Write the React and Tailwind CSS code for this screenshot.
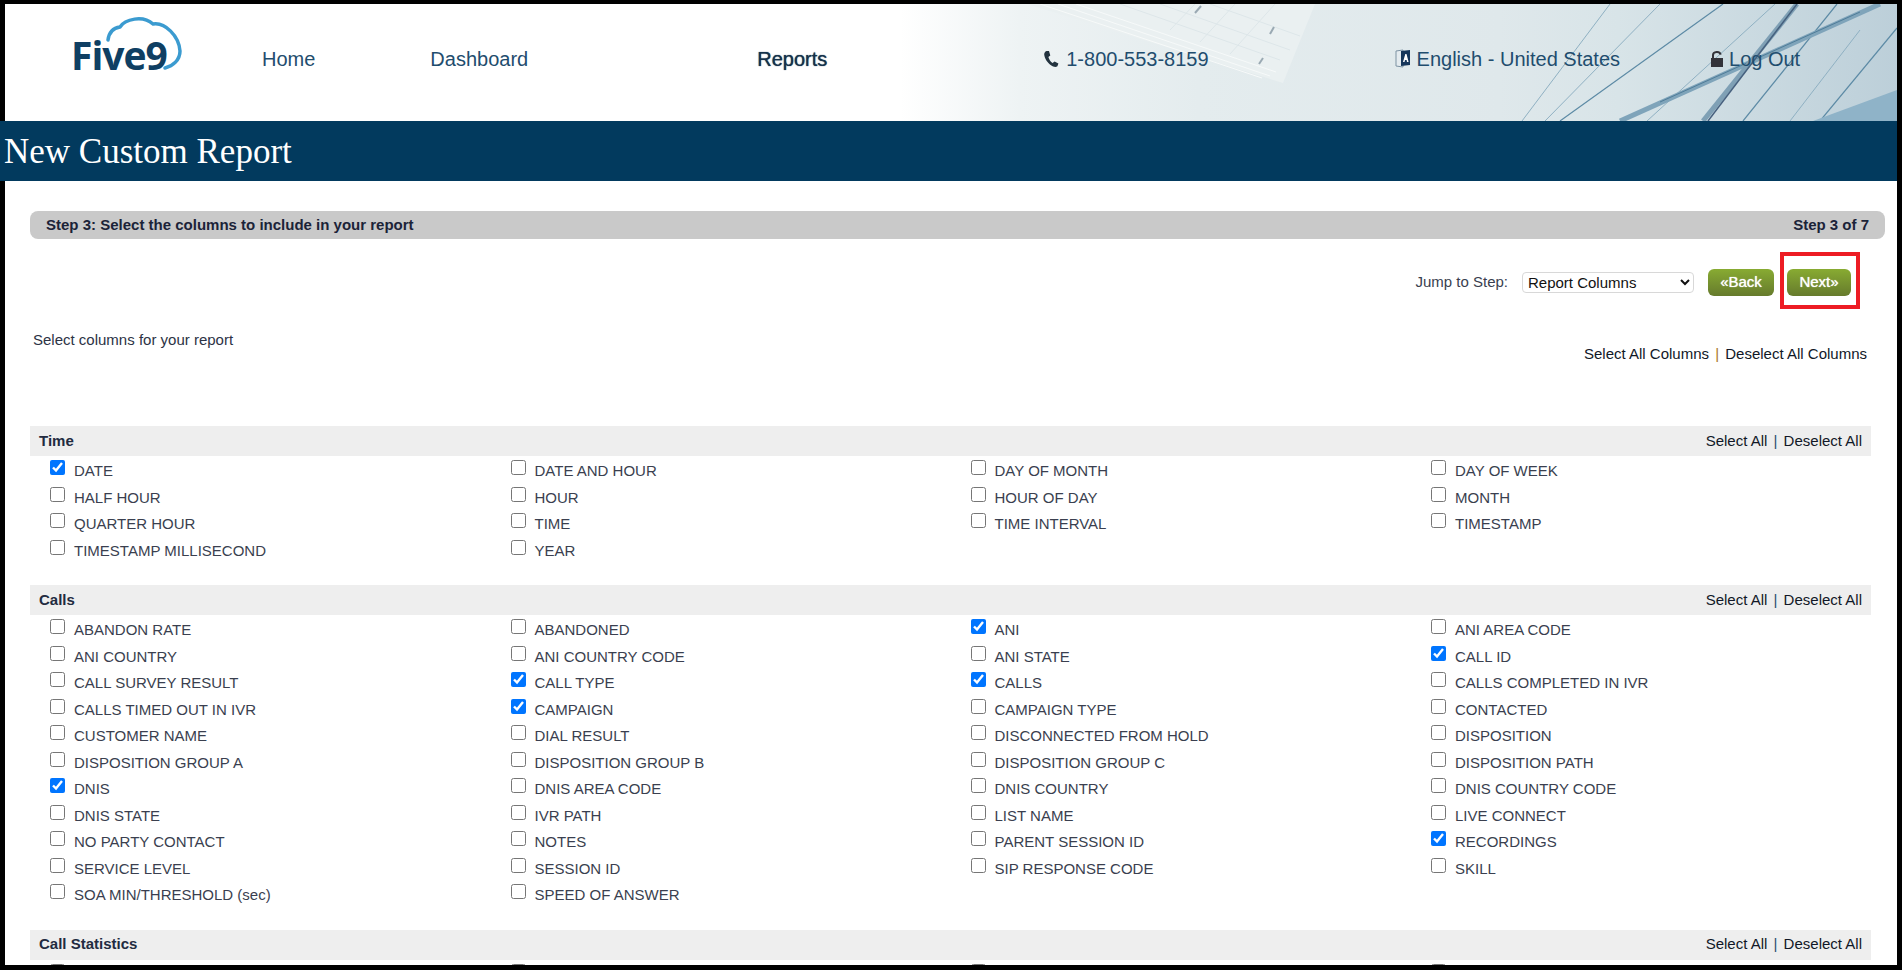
import { useState } from "react";

const sections = [
  {
    title: "Time",
    rows: [
      ["DATE*", "DATE AND HOUR", "DAY OF MONTH", "DAY OF WEEK"],
      ["HALF HOUR", "HOUR", "HOUR OF DAY", "MONTH"],
      ["QUARTER HOUR", "TIME", "TIME INTERVAL", "TIMESTAMP"],
      ["TIMESTAMP MILLISECOND", "YEAR"],
    ],
  },
  {
    title: "Calls",
    rows: [
      ["ABANDON RATE", "ABANDONED", "ANI*", "ANI AREA CODE"],
      ["ANI COUNTRY", "ANI COUNTRY CODE", "ANI STATE", "CALL ID*"],
      ["CALL SURVEY RESULT", "CALL TYPE*", "CALLS*", "CALLS COMPLETED IN IVR"],
      ["CALLS TIMED OUT IN IVR", "CAMPAIGN*", "CAMPAIGN TYPE", "CONTACTED"],
      ["CUSTOMER NAME", "DIAL RESULT", "DISCONNECTED FROM HOLD", "DISPOSITION"],
      ["DISPOSITION GROUP A", "DISPOSITION GROUP B", "DISPOSITION GROUP C", "DISPOSITION PATH"],
      ["DNIS*", "DNIS AREA CODE", "DNIS COUNTRY", "DNIS COUNTRY CODE"],
      ["DNIS STATE", "IVR PATH", "LIST NAME", "LIVE CONNECT"],
      ["NO PARTY CONTACT", "NOTES", "PARENT SESSION ID", "RECORDINGS*"],
      ["SERVICE LEVEL", "SESSION ID", "SIP RESPONSE CODE", "SKILL"],
      ["SOA MIN/THRESHOLD (sec)", "SPEED OF ANSWER"],
    ],
  },
  {
    title: "Call Statistics",
    rows: [["", "", "", ""]],
  },
];

// building photo behind the header, viewBox uses page coordinates
function HeaderArt() {
  return (
    <svg className="absolute inset-0 h-full w-full" viewBox="5 4 1892 117" preserveAspectRatio="none">
      <defs>
        <linearGradient id="fade" gradientUnits="userSpaceOnUse" x1="900" y1="0" x2="1897" y2="0">
          <stop offset="0" stopColor="#ffffff" />
          <stop offset="0.12" stopColor="#eef3f4" />
          <stop offset="0.3" stopColor="#e4ecee" />
          <stop offset="0.6" stopColor="#dfe8eb" />
          <stop offset="0.72" stopColor="#d8e4e8" />
          <stop offset="1" stopColor="#bccfd9" />
        </linearGradient>
      </defs>
      <rect x="5" y="4" width="1892" height="117" fill="url(#fade)" />
      <polygon points="1027,4 1315,4 1283,83" fill="#eaf0f1" />
      <g stroke="#f6f9f9" strokeWidth="1">
        <line x1="1040" y1="4" x2="1262" y2="78" />
        <line x1="1058" y1="4" x2="1270" y2="76" />
        <line x1="1076" y1="4" x2="1276" y2="72" />
      </g>
      <g stroke="#dde6e9" strokeWidth="1">
        <line x1="1120" y1="4" x2="1280" y2="60" />
        <line x1="1160" y1="4" x2="1290" y2="50" />
        <line x1="1210" y1="4" x2="1300" y2="36" />
        <line x1="1170" y1="30" x2="1195" y2="4" />
        <line x1="1200" y1="42" x2="1235" y2="4" />
        <line x1="1230" y1="54" x2="1275" y2="4" />
      </g>
      <g stroke="#9aa9b3" strokeWidth="2">
        <line x1="1195" y1="13" x2="1201" y2="6" />
        <line x1="1270" y1="34" x2="1274" y2="27" />
        <line x1="1259" y1="64" x2="1263" y2="58" />
      </g>
      <g stroke="#8fb0c2" strokeWidth="1" fill="none">
        <line x1="1522" y1="121" x2="1610" y2="4" />
        <line x1="1545" y1="121" x2="1660" y2="4" />
        <line x1="1647" y1="121" x2="1775" y2="4" />
        <line x1="1790" y1="121" x2="1860" y2="30" />
      </g>
      <g stroke="#5c8aa5" strokeWidth="1.2" fill="none">
        <line x1="1560" y1="121" x2="1723" y2="4" />
        <line x1="1743" y1="121" x2="1837" y2="4" />
        <line x1="1820" y1="121" x2="1897" y2="28" />
      </g>
      <line x1="1620" y1="121" x2="1880" y2="4" stroke="#7fa4ba" strokeWidth="5" />
      <line x1="1660" y1="102" x2="1860" y2="12" stroke="#4f7c98" strokeWidth="1" />
      <line x1="1703" y1="121" x2="1797" y2="4" stroke="#7fa0b5" strokeWidth="5" />
      <line x1="1708" y1="121" x2="1797" y2="4" stroke="#46607e" strokeWidth="1.5" />
      <polygon points="1813,121 1897,90 1897,121" fill="#8fb3c8" />
    </svg>
  );
}

function Logo() {
  return (
    <div className="relative h-[62px] w-[110px]">
      <svg className="absolute inset-0 overflow-visible" width="110" height="62" viewBox="0 0 110 62" fill="none">
        <path
          d="M35 24 C36 16 40 12 47 11 C52 3 70 -1 80 8 C92 6 106 20 107 35 C107 44 100 50 92 52"
          stroke="#3b9bd0"
          strokeWidth="3.5"
          strokeLinecap="round"
        />
      </svg>
      <span className="absolute bottom-[4px] left-[-2px] font-['Open_Sans',sans-serif] text-[39px] font-bold leading-none tracking-[-1px] text-[#0f3f63]">
        Five9
      </span>
    </div>
  );
}

function Field({ label }) {
  if (label === "") {
    return (
      <label className="flex items-start gap-[9px]">
        <input type="checkbox" className="mt-[3px] h-[15px] w-[15px]" />
      </label>
    );
  }
  const checked = label.endsWith("*");
  return (
    <label className="flex items-start gap-[9px]">
      <input type="checkbox" defaultChecked={checked} className="mt-[3px] h-[15px] w-[15px]" />
      <span className="mt-[5px] text-[15px] leading-[17px] text-[#3a3f4f]">{label.replace("*", "")}</span>
    </label>
  );
}

function Section({ section }) {
  return (
    <section className="mb-[22px]">
      <div className="flex h-[30px] items-center justify-between bg-[#eeeeee] px-[9px]">
        <h3 className="text-[15px] font-bold text-[#222b40]">{section.title}</h3>
        <p className="text-[15px] text-[#111827]">
          Select All <span className="mx-[2px] text-[#1f4d6e]">|</span> Deselect All
        </p>
      </div>
      <div className="pl-[20px] pt-[1px]">
        {section.rows.map((row, i) => (
          <div key={i} className="grid h-[26.5px] grid-cols-[460.5px_460px_460.5px_1fr]">
            {row.map((label, j) => (
              <Field key={j} label={label} />
            ))}
          </div>
        ))}
      </div>
    </section>
  );
}

export default function App() {
  const [step, setStep] = useState("Report Columns");

  return (
    <div className="h-[970px] w-[1902px] overflow-hidden bg-white font-['Liberation_Sans',Arial,sans-serif]">
      <div className="flex h-full flex-col border-b-[5px] border-l-[5px] border-r-[5px] border-t-[4px] border-black bg-white">
        <header className="relative flex h-[117px] shrink-0 items-start text-[20px] text-[#1f4d6e]">
          <HeaderArt />
          <div className="relative ml-[68px] mt-[12px]">
            <Logo />
          </div>
          <nav className="relative flex items-center pt-[40px]">
            <a className="ml-[79px]">Home</a>
            <a className="ml-[115px]">Dashboard</a>
            <a className="ml-[229px] text-[#15324b] [text-shadow:0_0_1px_#15324b]">Reports</a>
            <a className="ml-[216px] flex items-center gap-[7px]">
              <svg width="16" height="18" viewBox="0 0 16 18" fill="#23333f">
                <path d="M3.5 1 L6 1 L7.3 5.4 L5.4 7 C6 9.6 7.6 11.8 9.6 13 L11.6 11.4 L15.4 13.6 L14.4 16.3 C12.8 17.6 10.3 17 8 15.3 C4.4 12.7 1.6 8.6 1.2 4.6 C1.1 3 2 1.6 3.5 1 Z" />
              </svg>
              1-800-553-8159
            </a>
            <a className="ml-[186px] flex items-center gap-[6px]">
              <svg width="16" height="20" viewBox="0 0 16 20">
                <path d="M1 2 L8 1 L8 18 L1 17 Z" fill="#e4ebef" stroke="#7d93a3" />
                <path d="M6 2 L15 1 L15 16 L6 17 Z" fill="#16365a" />
                <path d="M8 13 L10.3 5 L11.5 5 L13.6 13 L12 13 L11.6 11 L10 11 L9.5 13 Z" fill="#ffffff" />
              </svg>
              English - United States
            </a>
            <a className="ml-[90px] flex items-center gap-[5px]">
              <svg width="14" height="18" viewBox="0 0 14 18" fill="#33333a">
                <path d="M1 8 H13 V17 H1 Z" />
                <path d="M3 8 V5 C3 1.4 10 0.6 10.6 4.6" fill="none" stroke="#33333a" strokeWidth="2" />
              </svg>
              Log Out
            </a>
          </nav>
        </header>

        <div className="-ml-[5px] flex h-[60px] shrink-0 items-center bg-[#023a5e] pl-[4px]">
          <h1 className="font-['Liberation_Serif',serif] text-[35px] leading-none text-white">New Custom Report</h1>
        </div>

        <main className="min-h-0 flex-1 overflow-hidden px-[25px] pt-[30px]">
          <div className="flex h-[28px] w-[1855px] items-center justify-between rounded-[8px] bg-[#c9c9c9] px-[16px] text-[15px] font-bold text-[#1b2338]">
            <span>Step 3: Select the columns to include in your report</span>
            <span>Step 3 of 7</span>
          </div>

          <div className="mt-[13px] flex h-[57px] w-[1830px] items-start justify-end">
            <div className="mt-[17px] flex items-center">
              <span className="text-[15px] text-[#3a3f4f]">Jump to Step:</span>
              <select
                value={step}
                onChange={(e) => setStep(e.target.value)}
                className="ml-[14px] h-[21px] w-[172px] rounded-[4px] border border-[#d8d8d8] bg-white pl-[1px] text-[15px] text-[#111111]"
              >
                <option>Report Columns</option>
              </select>
              <button className="ml-[14px] h-[27px] w-[66px] rounded-[6px] bg-gradient-to-b from-[#88ab32] to-[#667b2c] text-[15px] text-white [text-shadow:0_0_1px_#ffffff]">
                «Back
              </button>
            </div>
            <div className="ml-[6px] flex h-[57px] w-[80px] items-start border-[4px] border-[#ed1c24] pl-[3px] pt-[13px]">
              <button className="h-[27px] w-[64px] rounded-[6px] bg-gradient-to-b from-[#88ab32] to-[#667b2c] text-[15px] text-white [text-shadow:0_0_1px_#ffffff]">
                Next»
              </button>
            </div>
          </div>

          <div className="flex w-[1837px] items-start justify-between">
            <p className="ml-[3px] mt-[22px] text-[15px] leading-[17px] text-[#2c3345]">Select columns for your report</p>
            <p className="mt-[36px] text-[15px] leading-[17px] text-[#111827]">
              Select All Columns <span className="mx-[2px] text-[#a8742a]">|</span> Deselect All Columns
            </p>
          </div>

          <div className="mt-[64px] w-[1841px]">
            {sections.map((s) => (
              <Section key={s.title} section={s} />
            ))}
          </div>
        </main>
      </div>
    </div>
  );
}
